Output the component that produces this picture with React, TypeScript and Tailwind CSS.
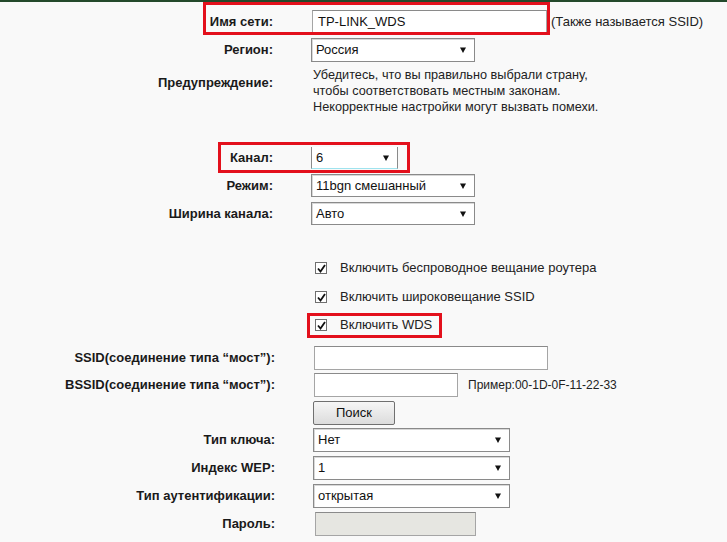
import React from "react";

const font = { fontFamily: '"Liberation Sans", Arial, sans-serif' };

function Arrow() {
  return (
    <svg width="6" height="6" viewBox="0 0 6 6" className="absolute right-[8px] top-1/2 -translate-y-1/2">
      <path d="M0 0.5 H6 L3 6 Z" fill="#111" />
    </svg>
  );
}

function Select({ value, w, h = 24 }: { value: string; w: number; h?: number }) {
  return (
    <div
      className="relative flex items-center bg-white border border-[#8a8a8a] pl-[4px] text-[13px] text-[#111] shadow-[inset_1px_1px_0_#d8d8d8]"
      style={{ width: w, height: h }}
    >
      {value}
      <Arrow />
    </div>
  );
}

function Input({ value = "", w, h = 24, disabled = false }: { value?: string; w: number; h?: number; disabled?: boolean }) {
  return (
    <div
      className={
        "flex items-center border border-[#a5a5a5] border-t-[#8a8a8a] pl-[5px] text-[13px] text-[#111] " +
        (disabled ? "bg-[#e6e6e1]" : "bg-white")
      }
      style={{ width: w, height: h }}
    >
      {value}
    </div>
  );
}

function Check() {
  return (
    <div className="w-[12px] h-[12px] border border-[#6f6f6f] bg-white flex items-center justify-center shrink-0">
      <svg width="9" height="9" viewBox="0 0 9 9">
        <path d="M1 4.5 L3.5 7.5 L8 1" stroke="#111" strokeWidth="1.8" fill="none" />
      </svg>
    </div>
  );
}

function Label({ children, w = 273 }: { children: React.ReactNode; w?: number }) {
  return (
    <div className="shrink-0 text-right font-bold text-[13px] text-[#1a1a1a]" style={{ width: w }}>
      {children}
    </div>
  );
}

export default function App() {
  return (
    <div className="relative w-[727px] h-[542px] overflow-hidden bg-[#f9f9f9]" style={font}>
      <div className="h-[2px] bg-[#23492b]" />

      {/* Имя сети */}
      <div className="mt-[8px] h-[23px] flex items-center">
        <Label>Имя сети:</Label>
        <div className="ml-[39px]">
          <Input value="TP-LINK_WDS" w={235} h={23} />
        </div>
        <div className="ml-[4px] text-[13px] text-[#222]">(Также называется SSID)</div>
      </div>

      {/* Регион */}
      <div className="mt-[5px] h-[24px] flex items-center">
        <Label>Регион:</Label>
        <div className="ml-[38px]">
          <Select value="Россия" w={164} />
        </div>
      </div>

      {/* Предупреждение */}
      <div className="mt-[5px] h-[48px] flex items-start">
        <div className="mt-[8px] leading-[16px]">
          <Label>Предупреждение:</Label>
        </div>
        <div className="ml-[40px] text-[12.7px] leading-[16px] text-[#222]">
          <div>Убедитесь, что вы правильно выбрали страну,</div>
          <div>чтобы соответствовать местным законам.</div>
          <div>Некорректные настройки могут вызвать помехи.</div>
        </div>
      </div>

      {/* Канал */}
      <div className="mt-[32px] h-[22px] flex items-center">
        <Label>Канал:</Label>
        <div className="ml-[38px] relative w-[87px] h-[22px] flex items-center pl-[4px] text-[13px] text-[#111] bg-white border-l border-r border-[#8a8a8a] border-b border-b-[#9fe3ee]">
          6
          <Arrow />
        </div>
      </div>

      {/* Режим */}
      <div className="mt-[5px] h-[23px] flex items-center">
        <Label>Режим:</Label>
        <div className="ml-[38px]">
          <Select value="11bgn смешанный" w={164} h={23} />
        </div>
      </div>

      {/* Ширина канала */}
      <div className="mt-[5px] h-[23px] flex items-center">
        <Label>Ширина канала:</Label>
        <div className="ml-[38px]">
          <Select value="Авто" w={164} h={23} />
        </div>
      </div>

      {/* Checkboxes */}
      <div className="mt-[33px] h-[20px] flex items-center pl-[315px] gap-[13px] text-[13px] text-[#222]">
        <Check />
        <span>Включить беспроводное вещание роутера</span>
      </div>
      <div className="mt-[9px] h-[20px] flex items-center pl-[315px] gap-[13px] text-[13px] text-[#222]">
        <Check />
        <span>Включить широковещание SSID</span>
      </div>
      <div className="mt-[8px] h-[20px] flex items-center pl-[315px] gap-[13px] text-[13px] text-[#222]">
        <Check />
        <span>Включить WDS</span>
      </div>

      {/* SSID */}
      <div className="mt-[11px] h-[24px] flex items-center">
        <Label w={275}>SSID(соединение типа “мост”):</Label>
        <div className="ml-[39px]">
          <Input w={234} />
        </div>
      </div>

      {/* BSSID */}
      <div className="mt-[3px] h-[24px] flex items-center">
        <Label w={275}>BSSID(соединение типа “мост”):</Label>
        <div className="ml-[39px]">
          <Input w={144} />
        </div>
        <div className="ml-[10px] text-[12px] text-[#222]">Пример:00-1D-0F-11-22-33</div>
      </div>

      {/* Поиск */}
      <div className="mt-[4px] h-[24px] flex items-center pl-[313px]">
        <button className="w-[82px] h-[24px] border border-[#707070] rounded-[2px] bg-gradient-to-b from-[#f6f6f6] to-[#dcdcdc] text-[13px] text-[#111]">
          Поиск
        </button>
      </div>

      {/* Тип ключа */}
      <div className="mt-[3px] h-[24px] flex items-center">
        <Label w={275}>Тип ключа:</Label>
        <div className="ml-[38px]">
          <Select value="Нет" w={197} />
        </div>
      </div>

      <div className="mt-[4px] h-[24px] flex items-center">
        <Label w={275}>Индекс WEP:</Label>
        <div className="ml-[38px]">
          <Select value="1" w={197} />
        </div>
      </div>

      <div className="mt-[4px] h-[24px] flex items-center">
        <Label w={275}>Тип аутентификации:</Label>
        <div className="ml-[38px]">
          <Select value="открытая" w={197} />
        </div>
      </div>

      <div className="mt-[4px] h-[24px] flex items-center">
        <Label w={275}>Пароль:</Label>
        <div className="ml-[40px]">
          <Input w={161} disabled />
        </div>
      </div>

      {/* Red annotation boxes */}
      <div className="absolute left-[203px] top-[2px] w-[347px] h-[33px] border-[3px] border-[#e3101c] pointer-events-none" />
      <div className="absolute left-[218px] top-[142px] w-[192px] h-[31px] border-[3px] border-[#e3101c] pointer-events-none" />
      <div className="absolute left-[307px] top-[313px] w-[135px] h-[25px] border-[3px] border-[#e3101c] pointer-events-none" />
    </div>
  );
}
